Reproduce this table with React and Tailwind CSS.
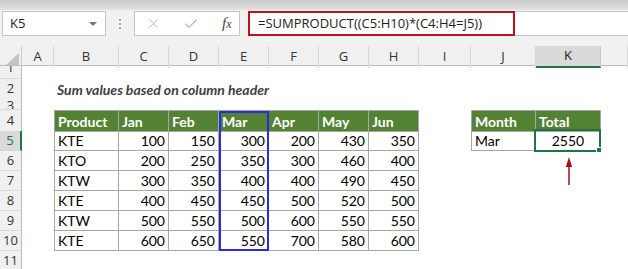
import React from 'react';
import { X, Check } from 'lucide-react';

const COLS = 'grid grid-cols-[22px_32px_65px_50px_50px_50px_50px_50px_50px_52px_65px_65px_1fr]';
const LETTERS = ['A', 'B', 'C', 'D', 'E', 'F', 'G', 'H', 'I', 'J', 'K', ''];

const header = ['Product', 'Jan', 'Feb', 'Mar', 'Apr', 'May', 'Jun'];
const data = [
    ['KTE', 100, 150, 300, 200, 430, 350],
    ['KTO', 200, 250, 350, 300, 460, 400],
    ['KTW', 300, 350, 400, 400, 490, 450],
    ['KTE', 400, 450, 450, 500, 520, 500],
    ['KTW', 500, 550, 500, 600, 550, 550],
    ['KTE', 600, 650, 550, 700, 580, 600],
];

const cellFont = { fontFamily: 'Lato, "Liberation Sans", sans-serif' };

function FormulaBar() {
    return (
        <>
            <div className="h-[10px] bg-gradient-to-b from-[#c9c9c9] to-[#e2e2e2]" />
            <div className="flex h-[36px] items-start bg-[#f1f1f1] pt-px font-['Open_Sans',sans-serif] text-[13px] text-[#222]">
                <div className="ml-[2px] flex h-[25px] w-[104px] items-center justify-between border border-[#c6c6c6] bg-white pl-[7px] pr-[8px]">
                    <span>K5</span>
                    <span className="h-0 w-0 border-x-[4px] border-t-[4px] border-x-transparent border-t-[#777]" />
                </div>
                <div className="flex h-[25px] w-[28px] flex-col items-center justify-center gap-[2px]">
                    <span className="h-[2px] w-[2px] bg-[#a8a8a8]" />
                    <span className="h-[2px] w-[2px] bg-[#a8a8a8]" />
                    <span className="h-[2px] w-[2px] bg-[#a8a8a8]" />
                </div>
                <div className="flex h-[25px] w-[106px] items-center border border-[#c6c6c6] bg-white">
                    <X size={15} strokeWidth={1.4} className="ml-[11px] text-[#b3b3b3]" />
                    <Check size={16} strokeWidth={1.6} className="ml-[22px] text-[#b3b3b3]" />
                    <span className="ml-[23px] font-['Liberation_Serif',serif] text-[15px] italic text-[#444]">
                        f<span className="text-[12px]">x</span>
                    </span>
                </div>
                <div className="ml-[8px] flex h-[25px] flex-1 border-y border-[#c6c6c6] bg-white">
                    <div className="-my-px flex h-[25px] w-[267px] items-center border-2 border-[#b8121b] pl-[8px]">
                        =SUMPRODUCT((C5:H10)*(C4:H4=J5))
                    </div>
                </div>
            </div>
        </>
    );
}

function ColumnHeaders() {
    return (
        <div className={`${COLS} h-[20px] border-b border-[#bcbcbc] bg-[#f0f0f0] font-['Open_Sans',sans-serif] text-[13px] text-[#333]`}>
            <div className="relative border-r border-[#c8c8c8]">
                <div className="absolute bottom-[3px] right-[2px] h-0 w-0 border-b-[12px] border-l-[13px] border-b-[#c4c4c4] border-l-transparent" />
            </div>
            {LETTERS.map((l, i) => (
                <div
                    key={i}
                    className={
                        l === 'K'
                            ? 'flex items-center justify-center border-r border-b-2 border-r-[#c8c8c8] border-b-[#217346] bg-[#dadada] text-[#222]'
                            : 'flex items-center justify-center border-r border-[#d8d8d8]'
                    }
                >
                    {l}
                </div>
            ))}
        </div>
    );
}

function RowHead({ n, active, inner }) {
    return (
        <div
            className={
                active
                    ? 'overflow-hidden border-b border-r-2 border-b-[#d4d4d4] border-r-[#217346] bg-[#dadada] text-center text-[#217346]'
                    : 'overflow-hidden border-b border-r border-b-[#dadada] border-r-[#bcbcbc] bg-[#f0f0f0] text-center text-[#333]'
            }
        >
            <div className={inner || 'leading-[19px]'}>{n}</div>
        </div>
    );
}

const HEAD = 'border-r border-b border-t border-[#a6a6a6] bg-[#548235] px-[3px] pt-px font-bold leading-[19px] text-white';
const BODY = 'border-r border-b border-[#a6a6a6] px-[3px] leading-[19px] text-black';

function TableRow({ n, cells, isHeader, extra }) {
    return (
        <div className={`${COLS} ${isHeader ? 'h-[21px]' : 'h-[20px]'} font-['Open_Sans',sans-serif] text-[13px]`}>
            <RowHead n={n} active={n === 5} inner={isHeader ? 'leading-[21px]' : 'leading-[19px]'} />
            <div />
            {cells.map((c, i) => (
                <div
                    key={i}
                    style={cellFont}
                    className={`${isHeader ? HEAD : BODY} ${i === 0 ? 'border-l' : ''} ${!isHeader && i > 0 ? 'text-right' : ''} ${i === 3 ? 'relative' : ''} text-[14px]`}
                >
                    {c}
                    {isHeader && i === 3 && (
                        <div className="pointer-events-none absolute left-0 top-0 z-10 h-[140px] w-[50px] border-2 border-[#2b2bdb]" />
                    )}
                </div>
            ))}
            <div />
            {extra}
            <div />
        </div>
    );
}

function EmptyRow({ n, h, inner, children }) {
    return (
        <div className={`${COLS} ${h} font-['Open_Sans',sans-serif] text-[13px]`}>
            <RowHead n={n} inner={inner} />
            {children}
        </div>
    );
}

export default function App() {
    return (
        <div className="h-[269px] w-[628px] overflow-hidden bg-white">
            <FormulaBar />
            <ColumnHeaders />
            <EmptyRow n={1} h="h-[13px]" inner="-mt-[9px] leading-[20px]" />
            <EmptyRow n={2} h="h-[19px]">
                <div />
                <div
                    style={cellFont}
                    className="col-span-7 whitespace-nowrap pl-[3px] pt-[1px] text-[14px] font-bold italic leading-[19px] text-[#404040]"
                >
                    Sum values based on column header
                </div>
            </EmptyRow>
            <EmptyRow n={3} h="h-[12px]" inner="-mt-[3px] leading-[20px]" />
            <TableRow
                n={4}
                cells={header}
                isHeader
                extra={
                    <>
                        <div style={cellFont} className={`${HEAD} border-l text-[14px]`}>Month</div>
                        <div style={cellFont} className={`${HEAD} text-[14px]`}>Total</div>
                    </>
                }
            />
            {data.map((r, i) => (
                <TableRow
                    key={i}
                    n={i + 5}
                    cells={r}
                    extra={
                        i === 0 ? (
                            <>
                                <div style={cellFont} className={`${BODY} border-l text-[14px]`}>Mar</div>
                                <div style={cellFont} className={`${BODY} relative text-center text-[14px]`}>
                                    2550
                                    <div className="pointer-events-none absolute -left-[2px] -top-[2px] z-10 h-[23px] w-[67px] border-2 border-[#217346]" />
                                    <div className="absolute left-[60px] top-[16px] z-20 h-[6px] w-[6px] border border-white bg-[#217346]" />
                                </div>
                            </>
                        ) : i === 1 ? (
                            <>
                                <div />
                                <div className="relative">
                                    <svg className="absolute left-[29px] top-[6px]" width="8" height="28" viewBox="0 0 8 28">
                                        <polygon points="4,0 0.8,10 7.2,10" fill="#a50f0f" />
                                        <line x1="4" y1="8" x2="4" y2="28" stroke="#a50f0f" strokeWidth="1.5" />
                                    </svg>
                                </div>
                            </>
                        ) : (
                            <>
                                <div />
                                <div />
                            </>
                        )
                    }
                />
            ))}
            <EmptyRow n={11} h="h-[20px]" />
        </div>
    );
}
